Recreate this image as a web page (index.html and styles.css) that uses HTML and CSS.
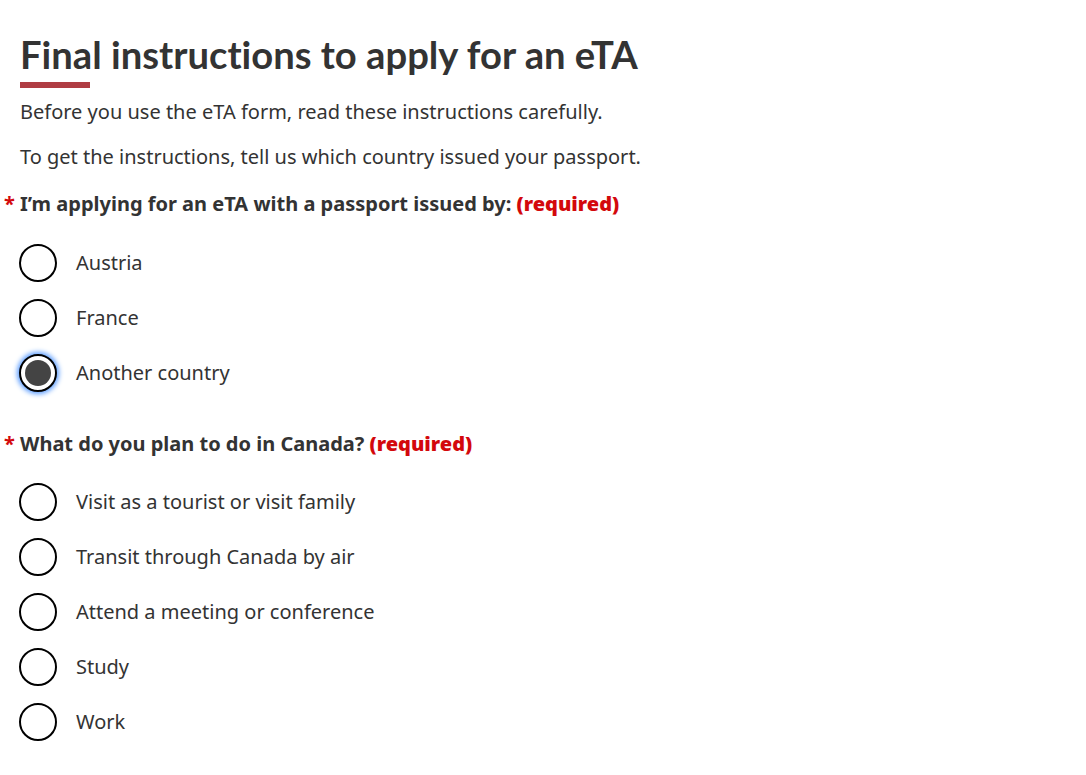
FILE: index.html
```html
<!DOCTYPE html>
<html lang="en">
<head>
<meta charset="utf-8">
<title>Final instructions to apply for an eTA</title>
<link rel="stylesheet" href="styles.css">
</head>
<body>
<main class="page">
  <h1 class="title">Final instructions to apply for an eTA</h1>
  <p class="text">Before you use the eTA form, read these instructions carefully.</p>
  <p class="text">To get the instructions, tell us which country issued your passport.</p>

  <fieldset class="group">
    <legend class="legend"><span class="star">*</span> I’m applying for an eTA with a passport issued by: <strong class="req">(required)</strong></legend>
    <label class="option"><input type="radio" name="country"><span class="dot"></span><span class="label">Austria</span></label>
    <label class="option"><input type="radio" name="country"><span class="dot"></span><span class="label">France</span></label>
    <label class="option"><input type="radio" name="country" checked><span class="dot focused"></span><span class="label">Another country</span></label>
  </fieldset>

  <fieldset class="group">
    <legend class="legend"><span class="star">*</span> What do you plan to do in Canada? <strong class="req">(required)</strong></legend>
    <label class="option"><input type="radio" name="plan"><span class="dot"></span><span class="label">Visit as a tourist or visit family</span></label>
    <label class="option"><input type="radio" name="plan"><span class="dot"></span><span class="label">Transit through Canada by air</span></label>
    <label class="option"><input type="radio" name="plan"><span class="dot"></span><span class="label">Attend a meeting or conference</span></label>
    <label class="option"><input type="radio" name="plan"><span class="dot"></span><span class="label">Study</span></label>
    <label class="option"><input type="radio" name="plan"><span class="dot"></span><span class="label">Work</span></label>
  </fieldset>
</main>
</body>
</html>
```
FILE: styles.css
```css
html, body {
  margin: 0;
  padding: 0;
  background: #fff;
}
body {
  font-family: "Noto Sans", "DejaVu Sans", sans-serif;
  font-size: 20px;
  line-height: 33px;
  color: #333;
}
.page {
  padding: 0 20px;
}
.title {
  font-family: Lato, "Liberation Sans", sans-serif;
  font-weight: 700;
  font-size: 38.2px;
  line-height: 46px;
  margin: 31px 0 6px;
  padding-bottom: 12px;
  position: relative;
  font-variant-ligatures: none;
}
.title::after {
  content: "";
  position: absolute;
  left: 0;
  bottom: 1px;
  width: 70px;
  height: 6px;
  background: #af3c43;
}
.text {
  margin: 0 0 12px;
}
.group {
  border: 0;
  margin: 14px 0 0;
  padding: 0;
}
.legend {
  font-weight: 700;
  padding: 0;
  margin-left: -16px;
  margin-bottom: 15px;
}
.group + .group .legend {
  margin-bottom: 14px;
}
.star {
  color: #d3080c;
}
.req {
  color: #d3080c;
}
.option {
  display: flex;
  align-items: center;
  height: 55px;
  cursor: pointer;
}
.option input {
  position: absolute;
  opacity: 0;
  width: 0;
  height: 0;
}
.dot {
  box-sizing: border-box;
  width: 38px;
  height: 38px;
  border: 2px solid #000;
  border-radius: 50%;
  background: #fff;
  flex: none;
  margin-left: -1px;
  position: relative;
}
.option input:checked + .dot::after {
  content: "";
  position: absolute;
  left: 4px;
  top: 4px;
  width: 26px;
  height: 26px;
  border-radius: 50%;
  background: #444;
}
.focused {
  box-shadow: 0 0 5px 2px #5b9dff;
}
.label {
  margin-left: 19px;
}
.group + .group {
  margin-top: 27px;
}
```
